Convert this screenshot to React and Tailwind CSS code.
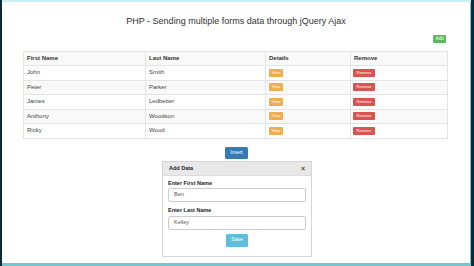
import React from 'react'

const rows = [
  ['John', 'Smith'],
  ['Peter', 'Parker'],
  ['James', 'Ledbetter'],
  ['Anthony', 'Woodson'],
  ['Ricky', 'Wood'],
]

const App = () => {
  return (
    <div className="w-[474px] h-[266px] overflow-hidden bg-[#0d2a38] flex" style={{ fontFamily: '"Liberation Sans", Arial, sans-serif' }}>
      <div className="ml-[2px] mr-[3px] flex-1 flex flex-col bg-[#74c7d0]">
        <div className="h-[2px] bg-[#c8f0f4]" />
        <div className="flex-1 bg-white mb-[3px] mr-[1px] flex flex-col text-[#333]">
          <h1 className="text-center text-[9px] leading-none mt-[15px] text-[#333]">
            PHP - Sending multiple forms data through jQuery Ajax
          </h1>

          <div className="flex justify-end pr-[24px] mt-[9px]">
            <button className="bg-[#5cb85c] text-white text-[4.5px] leading-none w-[13px] h-[8px] rounded-[1px] flex items-center justify-center">
              Add
            </button>
          </div>

          <table className="ml-[21px] mt-[8px] w-[424px] border-collapse text-[6px] table-fixed">
            <colgroup>
              <col className="w-[122px]" />
              <col className="w-[120px]" />
              <col className="w-[85px]" />
              <col className="w-[97px]" />
            </colgroup>
            <thead>
              <tr className="h-[14px] bg-[#f9f9f9]">
                <th className="border border-[#e4e4e4] text-left font-bold pl-[3px]">First Name</th>
                <th className="border border-[#e4e4e4] text-left font-bold pl-[3px]">Last Name</th>
                <th className="border border-[#e4e4e4] text-left font-bold pl-[3px]">Details</th>
                <th className="border border-[#e4e4e4] text-left font-bold pl-[3px]">Remove</th>
              </tr>
            </thead>
            <tbody>
              {rows.map(([first, last], i) => (
                <tr key={first} className={i % 2 === 1 ? 'h-[14.5px] bg-[#f9f9f9]' : 'h-[14.5px] bg-white'}>
                  <td className="border border-[#e4e4e4] pl-[3px] text-[#444]">{first}</td>
                  <td className="border border-[#e4e4e4] pl-[3px] text-[#444]">{last}</td>
                  <td className="border border-[#e4e4e4] pl-[3px]">
                    <span className="inline-flex items-center justify-center w-[14px] h-[8px] bg-[#f0ad4e] text-white text-[4px] rounded-[1px] align-middle">
                      View
                    </span>
                  </td>
                  <td className="border border-[#e4e4e4] pl-[2px]">
                    <span className="inline-flex items-center justify-center w-[22px] h-[8px] bg-[#d9534f] text-white text-[4px] rounded-[1px] align-middle">
                      Remove
                    </span>
                  </td>
                </tr>
              ))}
            </tbody>
          </table>

          <div className="flex justify-center mt-[8px] pl-[1px]">
            <button className="bg-[#337ab7] text-white text-[5px] w-[23px] h-[12px] rounded-[1.5px] flex items-center justify-center">
              Insert
            </button>
          </div>

          <div className="ml-[160px] mt-[2px] w-[150px] h-[96px] border border-[#d6d6d6] flex flex-col">
            <div className="h-[14px] shrink-0 bg-[#e8e8e8] border-b border-[#dcdcdc] flex items-center justify-between px-[6px]">
              <span className="text-[5.5px] font-bold text-[#222]">Add Data</span>
              <span className="text-[7px] font-bold text-[#444] leading-none">×</span>
            </div>
            <div className="px-[5px] flex flex-col">
              <label className="text-[5.5px] leading-[8px] font-bold text-[#222] mt-[3px]">Enter First Name</label>
              <div className="mt-[1px] h-[14px] border border-[#ccc] rounded-[2px] flex items-center pl-[5px] text-[5.5px] text-[#555]">
                Ben
              </div>
              <label className="text-[5.5px] leading-[8px] font-bold text-[#222] mt-[4px]">Enter Last Name</label>
              <div className="mt-[2px] h-[14px] border border-[#ccc] rounded-[2px] flex items-center pl-[5px] text-[5.5px] text-[#555]">
                Kelley
              </div>
              <div className="flex justify-center mt-[4px]">
                <button className="bg-[#5bc0de] text-white text-[5px] w-[22px] h-[13px] rounded-[1.5px] flex items-center justify-center">
                  Save
                </button>
              </div>
            </div>
          </div>
        </div>
      </div>
    </div>
  )
}

export default App
